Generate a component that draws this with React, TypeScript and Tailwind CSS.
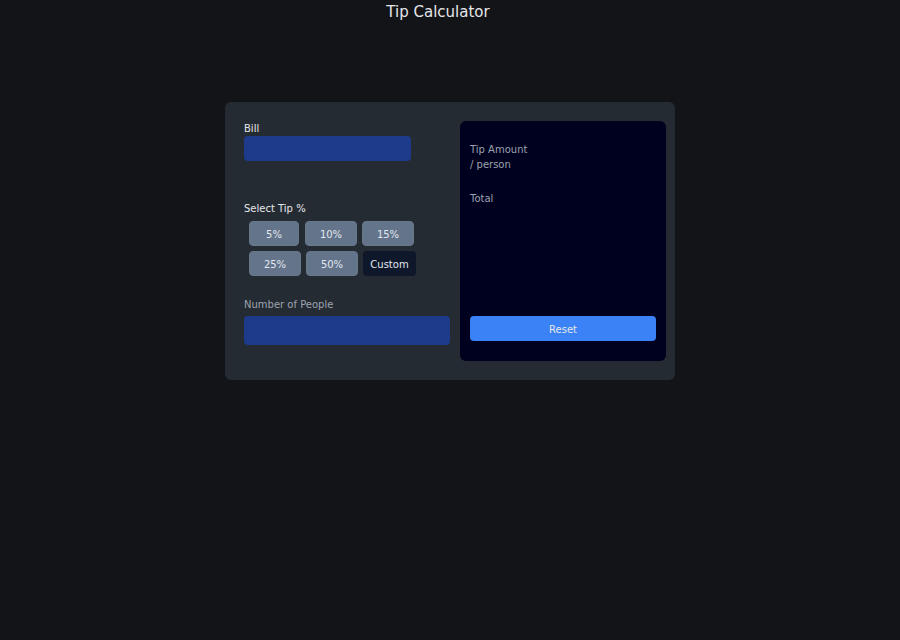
const tipRows = [
  [
    { label: "5%", w: "w-[50px]" },
    { label: "10%", w: "w-[52px] ml-px" },
    { label: "15%", w: "w-[52px]" },
  ],
  [
    { label: "25%", w: "w-[52px]" },
    { label: "50%", w: "w-[52px]" },
    { label: "Custom", w: "w-[53px]", custom: true },
  ],
];

export default function App() {
  return (
    <div className="min-h-screen bg-[#131417] font-['DejaVu_Sans',sans-serif]">
      <h1 className="pr-6 pt-px text-center text-[15px] leading-[22px] text-[#e5e7eb]">
        Tip Calculator
      </h1>

      <div className="mx-auto mt-[79px] grid w-[450px] grid-cols-[206px_206px] gap-[10px] rounded-md bg-[#252b33] pb-[19px] pl-[19px] pr-[9px] pt-[19px]">
        {/* inputs */}
        <div className="flex flex-col pt-[2px]">
          <label className="text-[10px] leading-[12px] text-[#e5e7eb]">Bill</label>
          <div className="mt-px h-[25px] w-[167px] rounded-[4px] bg-[#1e3a8a]" />

          <label className="mt-[42px] text-[10px] leading-[12px] text-[#e5e7eb]">
            Select Tip %
          </label>
          <div className="ml-[5px] mt-[6px] flex flex-col gap-[5px]">
            {tipRows.map((row, i) => (
              <div key={i} className="flex gap-[5px]">
                {row.map((tip) => (
                  <button
                    key={tip.label}
                    className={
                      tip.custom
                        ? `${tip.w} h-[25px] rounded-[4px] bg-[#0f172a] pt-px text-[10px] text-[#e2e8f0]`
                        : `${tip.w} h-[25px] rounded-[4px] border border-[#67778c] bg-[#64748b] pt-px text-[10px] text-[#e2e8f0]`
                    }
                  >
                    {tip.label}
                  </button>
                ))}
              </div>
            ))}
          </div>

          <label className="mt-[23px] text-[10px] leading-[12px] text-[#9ca3af]">
            Number of People
          </label>
          <div className="mt-[5px] h-[29px] w-full rounded-[4px] bg-[#1e3a8a]" />
        </div>

        {/* results */}
        <div className="flex h-[240px] flex-col rounded-md bg-[#00001f] px-[10px] pb-[20px]">
          <p className="mt-[22px] text-[10px] leading-[14.5px] text-[#9ca3af]">
            Tip Amount
            <br />/ person
          </p>
          <p className="mt-[20px] text-[10px] leading-[14.5px] text-[#9ca3af]">Total</p>
          <button className="mt-auto h-[25px] w-full rounded-[4px] bg-[#3b82f6] pt-px text-[10px] text-[#e5e7eb]">
            Reset
          </button>
        </div>
      </div>
    </div>
  );
}
